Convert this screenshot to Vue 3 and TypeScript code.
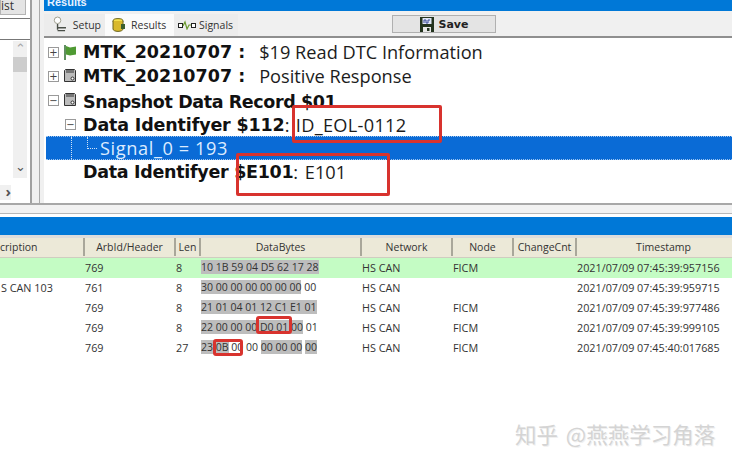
<script setup lang="ts">
interface Col { name: string; width: number }
interface Row { desc: string; arb: string; len: string; bytes: [string, boolean][]; net: string; node: string; ts: string; green?: boolean }

const cols: Col[] = [
  { name: 'cription', width: 85 },
  { name: 'ArbId/Header', width: 91 },
  { name: 'Len', width: 25 },
  { name: 'DataBytes', width: 161 },
  { name: 'Network', width: 91 },
  { name: 'Node', width: 61 },
  { name: 'ChangeCnt', width: 63 },
  { name: 'Timestamp', width: 175 },
]

const rows: Row[] = [
  { desc: '', arb: '769', len: '8', bytes: [['10 1B 59 04 D5 62 17 28', true]], net: 'HS CAN', node: 'FICM', ts: '2021/07/09 07:45:39:957156', green: true },
  { desc: 'S CAN 103', arb: '761', len: '8', bytes: [['30 00 00 00 00 00 00', true], [' 00', false]], net: 'HS CAN', node: '', ts: '2021/07/09 07:45:39:959715' },
  { desc: '', arb: '769', len: '8', bytes: [['21 01 04 01 12 C1 E1 01', true]], net: 'HS CAN', node: 'FICM', ts: '2021/07/09 07:45:39:977486' },
  { desc: '', arb: '769', len: '8', bytes: [['22 00 00 00 D0 01 00', true], [' 01', false]], net: 'HS CAN', node: 'FICM', ts: '2021/07/09 07:45:39:999105' },
  { desc: '', arb: '769', len: '27', bytes: [['23 0B', true], [' 00 00 ', false], ['00 00 00', true], [' ', false], ['00', true]], net: 'HS CAN', node: 'FICM', ts: '2021/07/09 07:45:40:017685' },
]
</script>

<template>
  <div class="page">
    <section class="top">
      <aside class="left">
        <div class="ist">ist</div>
        <div class="field"></div>
        <div class="vscroll">
          <span class="chev">⌃</span>
          <span class="thumb"></span>
          <span class="chev down">⌄</span>
        </div>
        <div class="hscroll">›</div>
      </aside>
      <div class="split"></div>
      <main class="results">
        <div class="title">Results</div>
        <div class="toolbar">
          <div class="tab">
            <svg width="20" height="20" viewBox="0 0 20 20">
              <circle cx="7" cy="5" r="3.5" fill="#fff" stroke="#9a9a8a" />
              <path d="M7 9v6M7 13h9M7 16h8" stroke="#4a4f48" stroke-width="1.5" fill="none" />
            </svg>
            <span>Setup</span>
          </div>
          <div class="tab active">
            <svg width="14" height="14" viewBox="0 0 14 14">
              <ellipse cx="6" cy="3" rx="5" ry="2.4" fill="#f4e04c" stroke="#6a6420" />
              <path d="M1 3v8c0 1.300 2.200 2.400 5 2.400s5-1.100 5-2.400V3" fill="#d9b92c" stroke="#6a6420" />
              <path d="M9 6h4v5H9z" fill="#3d5f2e" />
            </svg>
            <span>Results</span>
          </div>
          <div class="tab">
            <svg width="18" height="10" viewBox="0 0 18 10">
              <rect x="0.500" y="3.500" width="4" height="4" fill="#fff" stroke="#222" />
              <rect x="13.500" y="3.500" width="4" height="4" fill="#fff" stroke="#222" />
              <path d="M5 6l2-4 2 7 2-4h2" fill="none" stroke="#6b9a2e" stroke-width="1.200" />
            </svg>
            <span>Signals</span>
          </div>
          <button class="save">
            <svg width="14" height="15" viewBox="0 0 14 15">
              <rect width="14" height="15" fill="#24341f" />
              <rect x="2.500" y="1" width="9" height="6" fill="#dfe6f6" />
              <path d="M4 6V3h2v3h2V3h2" fill="none" stroke="#3a4a9a" />
              <rect x="3" y="10" width="8" height="5" fill="#e8e8e8" />
              <rect x="7" y="11" width="2.500" height="3" fill="#24341f" />
            </svg>
            <span>Save</span>
          </button>
        </div>
        <div class="tree">
          <div class="node mtk">
            <span class="exp">+</span>
            <svg class="ico" width="13" height="15" viewBox="0 0 13 15">
              <path d="M1 0v15" stroke="#2d6a2d" stroke-width="1.500" />
              <path d="M2 1l4 1.500 6-1v8l-6 1-4-1z" fill="#4f9a33" />
            </svg>
            <b>MTK_20210707 :</b><span class="val first">$19 Read DTC Information</span>
          </div>
          <div class="node mtk">
            <span class="exp">+</span>
            <svg class="ico" width="12" height="13" viewBox="0 0 12 13">
              <path d="M0.500 1.500l1-1h9l1 1v11H0.500z" fill="#bcbcbc" stroke="#333" />
              <path d="M3 1v3M5 1v3M7 1v3M9 1v3" stroke="#333" />
              <circle cx="8.500" cy="9.500" r="1.500" fill="#fff" stroke="#333" />
            </svg>
            <b>MTK_20210707 :</b><span class="val first">Positive Response</span>
          </div>
          <div class="node rec">
            <span class="exp">−</span>
            <svg class="ico" width="12" height="13" viewBox="0 0 12 13">
              <path d="M0.500 1.500l1-1h9l1 1v11H0.500z" fill="#bcbcbc" stroke="#333" />
              <path d="M3 1v3M5 1v3M7 1v3M9 1v3" stroke="#333" />
              <circle cx="8.500" cy="9.500" r="1.500" fill="#fff" stroke="#333" />
            </svg>
            <b>Snapshot Data Record $01</b>
          </div>
          <div class="node did up">
            <span class="exp inner">−</span>
            <b>Data Identifyer $112</b><span class="val idv">: ID_EOL-0112</span>
          </div>
          <div class="node sel">
            <span class="guide"></span>
            <span class="elbow"></span>
            <span class="sig">Signal_0 = 193</span>
          </div>
          <div class="node did2">
            <b>Data Identifyer $E101</b><span class="val e101">: E101</span>
          </div>
        </div>
      </main>
    </section>

    <div class="band"></div>
    <div class="blue"></div>
    <div class="ticks"></div>

    <section class="grid">
      <div class="row head">
        <div v-for="c in cols" :key="c.name" class="hcell" :style="{ width: c.width + 'px' }">{{ c.name }}</div>
      </div>
      <div v-for="(r, i) in rows" :key="i" class="row body" :class="{ green: r.green }">
        <div class="cell" :style="{ width: cols[0].width + 'px' }">{{ r.desc }}</div>
        <div class="cell" :style="{ width: cols[1].width + 'px' }">{{ r.arb }}</div>
        <div class="cell" :style="{ width: cols[2].width + 'px' }">{{ r.len }}</div>
        <div class="cell bytes" :style="{ width: cols[3].width + 'px' }">
          <span v-for="(b, j) in r.bytes" :key="j" :class="{ hl: b[1] }">{{ b[0] }}</span>
        </div>
        <div class="cell" :style="{ width: cols[4].width + 'px' }">{{ r.net }}</div>
        <div class="cell" :style="{ width: cols[5].width + 'px' }">{{ r.node }}</div>
        <div class="cell" :style="{ width: cols[6].width + 'px' }"></div>
        <div class="cell" :style="{ width: cols[7].width + 'px' }">{{ r.ts }}</div>
      </div>
    </section>

    <div class="mark box1"></div>
    <div class="mark box2"></div>
    <div class="mark box3"></div>
    <div class="mark box4"></div>
    <div class="water">知乎 @燕燕学习角落</div>
  </div>
</template>

<style>
html, body { margin: 0; background: #fff; overflow: hidden; }
</style>

<style scoped>
.page {
  position: relative;
  width: 732px;
  height: 465px;
  overflow: hidden;
  background: #fff;
  font-family: "Open Sans", "Noto Sans", sans-serif;
  color: #222;
}
.top { display: flex; height: 205px; background: #f0f0f0; border-bottom: 2px solid #a8a8a8; box-sizing: border-box; }
.left {
  width: 32px;
  box-sizing: border-box;
  border-right: 2px solid #a0a0a0;
  display: flex;
  flex-direction: column;
  background: #fff;
  position: relative;
}
.ist {
  height: 15px;
  width: 26px;
  background: #e4e4e4;
  border: 1px solid #b4b4b4;
  border-top: 0;
  box-sizing: border-box;
  font-size: 12px;
  line-height: 11px;
  color: #333;
}
.field { height: 20px; margin-top: 3px; border-top: 1px solid #777; border-bottom: 1px solid #777; box-sizing: content-box; }
.vscroll {
  position: absolute;
  left: 13px;
  top: 41px;
  width: 14px;
  height: 137px;
  background: #f0f0f0;
  display: flex;
  flex-direction: column;
  align-items: center;
}
.chev { font-size: 13px; line-height: 15px; height: 16px; color: #a8a8a8; }
.chev.down { margin-top: auto; color: #555; line-height: 8px; }
.thumb { width: 14px; height: 15px; background: #cdcdcd; }
.hscroll {
  position: absolute;
  left: 0;
  bottom: 3px;
  width: 11px;
  height: 15px;
  background: #f0f0f0;
  font-size: 15px;
  line-height: 13px;
  color: #555;
  font-weight: 700;
  text-align: right;
}
.split {
  width: 7px;
  background: #f0f0f0;
  border-right: 1px solid #aaa;
}
.results { flex: 1; min-width: 0; padding-left: 4px; display: flex; flex-direction: column; background: #f0f0f0; }
.title {
  height: 11px;
  background: #0078d7;
  color: #e8f2ff;
  font-family: "Liberation Sans", sans-serif;
  font-weight: 700;
  font-size: 11px;
  line-height: 4px;
  padding-left: 3px;
  overflow: hidden;
}
.toolbar {
  height: 27px;
  display: flex;
  align-items: center;
  border-bottom: 2px solid #8f8f8f;
  box-sizing: border-box;
  font-size: 10.500px;
  color: #333;
}
.tab { display: flex; align-items: center; gap: 4px; height: 22px; margin-top: 3px; padding: 0 4px; box-sizing: border-box; background: #ececec; }
.tab:first-child { width: 61px; padding-left: 7px; gap: 5px; }
.tab.active { background: #fbfbfb; width: 69px; padding-left: 7px; gap: 5px; }
.tab:nth-child(3) { width: 64px; gap: 3px; padding-left: 4px; }
.tab:first-child span { margin-left: -2px; }
.save {
  margin-left: 154px;
  width: 104px;
  height: 18px;
  display: flex;
  align-items: center;
  justify-content: center;
  gap: 5px;
  background: #e4e4e4;
  border: 1px solid #b0b0b0;
  font: 700 11px "DejaVu Sans", sans-serif;
  color: #222;
  padding: 0;
  margin-top: 1px;
}
.tree { flex: 1; background: #fff; padding-top: 2px; min-height: 0; overflow: hidden; }
.node {
  position: relative;
  height: 24px;
  display: flex;
  align-items: center;
  padding-left: 39px;
  font-size: 18.200px;
  white-space: nowrap;
  color: #111;
  box-sizing: border-box;
}
.node b {
  font-family: "DejaVu Sans", sans-serif;
  font-size: 17.500px;
}
.mtk b { letter-spacing: 0; }
.rec b { letter-spacing: -0.400px; }
.did b { letter-spacing: -0.150px; }
.did2 b { letter-spacing: -0.300px; }
.rec { padding-top: 4px; }
.up { padding-top: 2px; }
.val { color: #1c1c1c; font-family: "Open Sans", sans-serif; }
.val.first { margin-left: 14px; }
.idv { letter-spacing: 0.300px; word-spacing: 1px; }
.e101 { word-spacing: 2px; }
.exp {
  position: absolute;
  left: 4px;
  top: 7px;
  width: 9px;
  height: 9px;
  border: 1px solid #9a9a9a;
  font: 10px/9px "DejaVu Sans", sans-serif;
  text-align: center;
  color: #444;
}
.exp.inner { left: 21px; }
.ico { position: absolute; left: 20px; top: 5px; }
.sel {
  background: #0a6bd6;
  height: 24px;
  margin-left: 2px;
  border-top: 1px dotted #9cc4f0;
  border-bottom: 1px dotted #9cc4f0;
}
.guide { position: absolute; left: 25px; top: 0; bottom: 0; border-left: 1px dotted #cfe2f8; }
.elbow { position: absolute; left: 41px; top: 0; height: 11px; width: 9px; border-left: 1px dotted #cfe2f8; border-bottom: 1px dotted #cfe2f8; }
.sig { color: #dcebff; margin-left: 15px; letter-spacing: 0.600px; }
.band { height: 8px; background: #f2f2f2; border-bottom: 1px solid #b8b8b8; }
.blue { height: 18px; margin-top: 3px; background: #0078d7; }
.ticks { height: 3px; background: #dcdcdc; }
.grid { font-size: 10.800px; color: #333; }
.row { display: flex; height: 20px; align-items: center; white-space: nowrap; }
.body { box-sizing: border-box; padding-bottom: 2px; }
.head { height: 20px; background: #ece9d8; border-bottom: 1px solid #cfcdc0; box-sizing: border-box; font-size: 10.500px; padding-bottom: 1px; }
.hcell {
  box-sizing: border-box;
  height: 100%;
  display: flex;
  align-items: center;
  justify-content: center;
  border-right: 2px solid #a9a79a;
  background: #ece9d8;
  flex: none;
}
.hcell:first-child { justify-content: flex-start; }
.cell { flex: none; box-sizing: border-box; overflow: hidden; }
.cell:first-child { padding-left: 1px; }
.green { background: #c4fcc4; }
.hl { background: #bdbdbd; }
.bytes { white-space: pre; font-size: 10.500px; }
.mark { position: absolute; box-sizing: border-box; border: 3px solid #d8332e; border-radius: 2px; }
.box1 { left: 292px; top: 105px; width: 150px; height: 38px; }
.box2 { left: 236px; top: 153px; width: 154px; height: 43px; }
.box3 { left: 256px; top: 316px; width: 36px; height: 18px; border-radius: 3px; }
.box4 { left: 213px; top: 339px; width: 30px; height: 17px; border-radius: 3px; }
.water {
  position: absolute;
  left: 515px;
  top: 420px;
  font-family: "Noto Sans CJK SC", sans-serif;
  font-size: 21.500px;
  word-spacing: 3px;
  line-height: 28px;
  color: #d4d4d4;
  text-shadow: 1px 1px 0 #f0f0f0;
  white-space: nowrap;
}
</style>
